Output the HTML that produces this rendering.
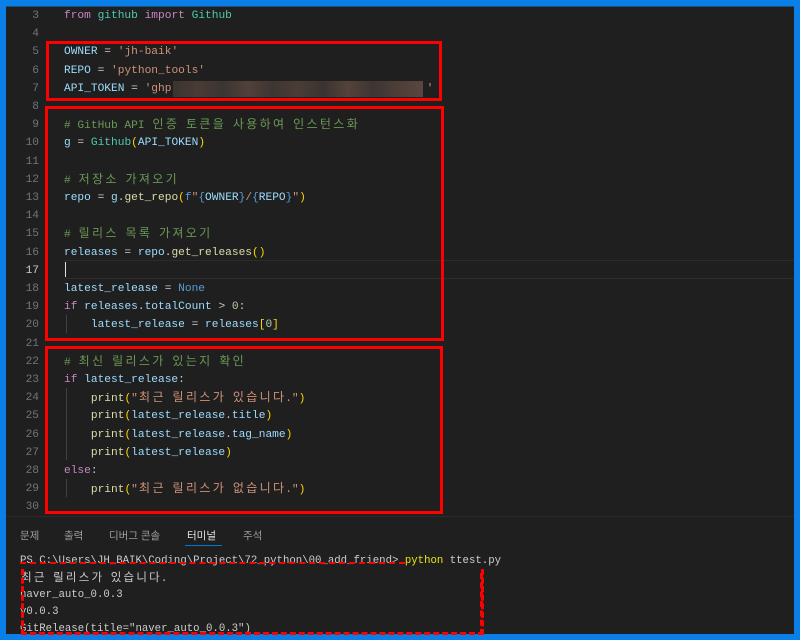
<!DOCTYPE html>
<html><head><meta charset="utf-8"><style>
*{margin:0;padding:0;box-sizing:border-box}
body{width:800px;height:640px;background:#0a7fe8;position:relative;overflow:hidden;font-family:"Liberation Mono","Noto Sans CJK KR",monospace}
#win{position:absolute;left:6px;top:6px;width:788px;height:628px;background:#1f1f1f;border-top:1px solid #1b4f80}
.ln{position:absolute;left:0;width:33px;text-align:right;color:#6e7681;font-size:11.2px;line-height:18px}
.cl{position:absolute;left:58px;color:#cccccc;font-size:11.2px;line-height:18px;white-space:pre}
.k{color:#c586c0}.v{color:#9cdcfe}.s{color:#ce9178}.f{color:#dcdcaa}.c{color:#4ec9b0}.m{color:#6a9955}.b{color:#ffd700}.n{color:#569cd6}.nu{color:#b5cea8}
.h{display:inline-block;width:13.4px;text-align:center;font-size:12px}
.t .h{width:12.8px;font-size:11.5px}
.box{position:absolute;border:3px solid #ff0000}
.g{position:absolute;left:60px;width:1px;background:#404040}
.tab{position:absolute;top:521px;font-size:10.5px;color:#9d9d9d;font-family:"Liberation Sans","Noto Sans CJK KR",sans-serif}
.t{position:absolute;left:14px;font-size:10.7px;color:#cccccc;white-space:pre;line-height:17px}
</style></head><body>
<div id="win">
<div style="position:absolute;left:58px;top:253px;width:730px;height:19px;border-top:1px solid #2c2c2c;border-bottom:1px solid #2c2c2c"></div>
<div style="position:absolute;left:59px;top:255px;width:1px;height:15px;background:#ddd"></div>
<div class="g" style="top:308px;height:18px"></div>
<div class="g" style="top:381px;height:72px"></div>
<div class="g" style="top:472px;height:18px"></div>
<div id="code"></div>
<div style="position:absolute;left:167px;top:74px;width:250px;height:16px;background:linear-gradient(90deg,#3a3330,#4a3b36 10%,#3b3431 20%,#52403a 30%,#3d3532 40%,#4b3c36 50%,#3a3330 60%,#54423b 70%,#3e3532 80%,#4e3e38 90%,#5a463e)"></div>
<div class="box" style="left:40px;top:34px;width:396px;height:60px"></div>
<div class="box" style="left:39px;top:99px;width:399px;height:235px"></div>
<div class="box" style="left:39px;top:339px;width:398px;height:168px"></div>
<div style="position:absolute;left:0;top:509px;width:788px;height:1px;background:#2b2b2b"></div>
<div class="tab" style="left:14px">문제</div>
<div class="tab" style="left:58px">출력</div>
<div class="tab" style="left:103px">디버그 콘솔</div>
<div class="tab" style="left:181px;color:#e7e7e7">터미널</div>
<div style="position:absolute;left:179px;top:538px;width:37px;height:1px;background:#0078d4"></div>
<div class="tab" style="left:237px">주석</div>
<div class="t" style="top:546px">PS C:\Users\JH_BAIK\Coding\Project\72_python\00_add_friend&gt; <span style="color:#e5e510">python</span> ttest.py</div>
<div style="position:absolute;left:14px;top:555px;width:385px;height:0;border-top:2px dashed #ff0000"></div>
<div class="t" id="t1" style="top:563px">최근 릴리스가 있습니다.</div>
<div class="t" style="top:580px">naver_auto_0.0.3</div>
<div class="t" style="top:597px">v0.0.3</div>
<div class="t" style="top:614px">GitRelease(title="naver_auto_0.0.3")</div>
<div style="position:absolute;left:15px;top:562px;width:463px;height:66px;border:3px dashed #ff0000;border-top:none"></div>
<div style="position:absolute;left:474px;top:566px;width:4px;height:62px;border-left:3px dashed #ff0000"></div>
</div>
<script>
const L={3:'<span class="k">from</span> <span class="c">github</span> <span class="k">import</span> <span class="c">Github</span>',4:'',
5:'<span class="v">OWNER</span> = <span class="s">\'jh-baik\'</span>',6:'<span class="v">REPO</span> = <span class="s">\'python_tools\'</span>',
7:'<span class="v">API_TOKEN</span> = <span class="s">\'ghp                                      \'</span>',8:'',
9:'<span class="m"># GitHub API 인증 토큰을 사용하여 인스턴스화</span>',10:'<span class="v">g</span> = <span class="c">Github</span><span class="b">(</span><span class="v">API_TOKEN</span><span class="b">)</span>',11:'',
12:'<span class="m"># 저장소 가져오기</span>',13:'<span class="v">repo</span> = <span class="v">g</span>.<span class="f">get_repo</span><span class="b">(</span><span class="n">f</span><span class="s">"</span><span class="n">{</span><span class="v">OWNER</span><span class="n">}</span><span class="s">/</span><span class="n">{</span><span class="v">REPO</span><span class="n">}</span><span class="s">"</span><span class="b">)</span>',14:'',
15:'<span class="m"># 릴리스 목록 가져오기</span>',16:'<span class="v">releases</span> = <span class="v">repo</span>.<span class="f">get_releases</span><span class="b">()</span>',17:'',
18:'<span class="v">latest_release</span> = <span class="n">None</span>',19:'<span class="k">if</span> <span class="v">releases</span>.<span class="v">totalCount</span> &gt; <span class="nu">0</span>:',
20:'    <span class="v">latest_release</span> = <span class="v">releases</span><span class="b">[</span><span class="nu">0</span><span class="b">]</span>',21:'',
22:'<span class="m"># 최신 릴리스가 있는지 확인</span>',23:'<span class="k">if</span> <span class="v">latest_release</span>:',
24:'    <span class="f">print</span><span class="b">(</span><span class="s">"최근 릴리스가 있습니다."</span><span class="b">)</span>',25:'    <span class="f">print</span><span class="b">(</span><span class="v">latest_release</span>.<span class="v">title</span><span class="b">)</span>',
26:'    <span class="f">print</span><span class="b">(</span><span class="v">latest_release</span>.<span class="v">tag_name</span><span class="b">)</span>',27:'    <span class="f">print</span><span class="b">(</span><span class="v">latest_release</span><span class="b">)</span>',
28:'<span class="k">else</span>:',29:'    <span class="f">print</span><span class="b">(</span><span class="s">"최근 릴리스가 없습니다."</span><span class="b">)</span>',30:''};
const W=s=>s.replace(/([\uAC00-\uD7A3])/g,'<span class="h">$1</span>');
let h='';for(let i=3;i<=30;i++){const y=(i-3)*18.2;h+=`<div class="ln" style="top:${y}px${i==17?';color:#ccc':''}">${i}</div><div class="cl" style="top:${y}px">${W(L[i])}</div>`}
document.getElementById('code').innerHTML=h;
const t1=document.getElementById('t1');t1.innerHTML=W(t1.innerHTML);
</script>
</body></html>
